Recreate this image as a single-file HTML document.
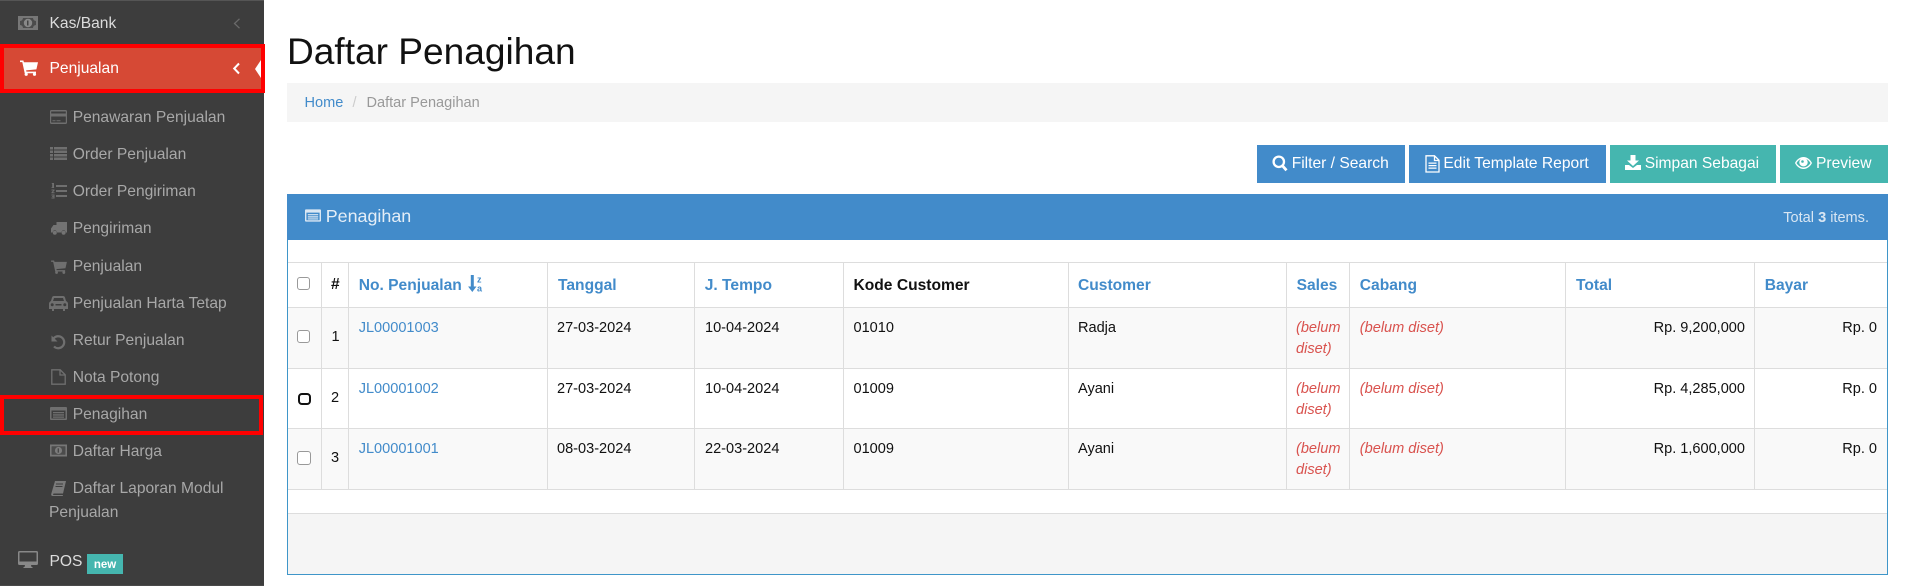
<!DOCTYPE html>
<html><head><meta charset="utf-8"><title>Daftar Penagihan</title>
<style>
html,body{margin:0;padding:0;background:#fff;width:1910px;height:586px;overflow:hidden}
body{position:relative;font-family:"Liberation Sans",Arial,sans-serif;font-size:14.56px;color:#111}
.a{position:absolute}
.t{position:absolute;white-space:nowrap;line-height:20px;height:20px}
.s{font-size:15.6px;color:#a8a8a8}
.m{font-size:15.6px;color:#dcdcdc}
.h{font-size:15.6px;font-weight:bold;color:#428bca;top:276px}
.l{color:#428bca}
.r{color:#d9534f;font-style:italic}
.b{position:absolute;top:145px;height:38px;background:#428bca}
.g{background:#45b6af}
.bt{font-size:15.6px;color:#fff;top:154px}
.hl{position:absolute;left:288px;width:1599px;height:1px;background:#ddd}
.vl{position:absolute;top:262px;width:1px;height:228px;background:#ddd}
.c{position:absolute;left:297px;width:11px;height:11px;border:1.5px solid #999;border-radius:3px;background:#fff}
svg{position:absolute;display:block}
</style></head><body>
<div class="a" style="left:0;top:0;width:264px;height:586px;background:#3d3d3d"></div>
<div class="a" style="left:0;top:0;width:264px;height:1px;background:#555"></div>
<div class="a" style="left:0;top:585px;width:264px;height:1px;background:#4a4a4a"></div>

<svg style="left:18px;top:16px" width="20" height="14" viewBox="0 0 20 14"><path fill="#777" fill-rule="evenodd" d="M0 0h20v14H0zM2 2.500v9h16v-9z"/><rect x="2" y="2" width="16" height="10" fill="#4c4c4c"/><path d="M2 2h3a3 3 0 0 1-3 3zM18 2h-3a3 3 0 0 0 3 3zM2 12h3a3 3 0 0 0-3-3zM18 12h-3a3 3 0 0 1 3-3z" fill="#777"/><circle cx="10" cy="7" r="4.200" fill="#888"/><path d="M9 4.500h1.500v5H9z" fill="#444"/></svg>
<div class="t m" style="left:49.500px;top:14px">Kas/Bank</div>
<svg style="left:233px;top:18px" width="8" height="11" viewBox="0 0 8 11"><path d="M6.500 .8 1.500 5.500l5 4.700" fill="none" stroke="#6a6a6a" stroke-width="1.300"/></svg>

<div class="a" style="left:0;top:44px;width:257px;height:41px;border:4px solid #f00;background:#d64935"></div>
<svg style="left:20px;top:60px" width="18" height="16" viewBox="0 0 18 16"><path fill="#fff" d="M0 .5h3.400l.5 1.700H18l-1.600 7.200-10.300 1 .3 1.200H16v1.600H4.700L2.300 2.100H0z"/><circle cx="6.200" cy="14.300" r="1.600" fill="#fff"/><circle cx="14.500" cy="14.300" r="1.600" fill="#fff"/></svg>
<div class="t" style="left:49.500px;top:58.500px;font-size:15.6px;color:#fff">Penjualan</div>
<svg style="left:232px;top:62px" width="9" height="13" viewBox="0 0 9 13"><path d="M7 1.500 2.200 6.500l4.800 5" fill="none" stroke="#fff" stroke-width="2"/></svg>
<svg style="left:255px;top:60px" width="6" height="18" viewBox="0 0 6 18"><path d="M6 0v18L0 9z" fill="#fff"/></svg>

<svg style="left:50px;top:110px" width="17" height="14" viewBox="0 0 17 14"><path fill="#6f6f6f" fill-rule="evenodd" d="M1.500 0h14A1.500 1.500 0 0 1 17 1.500v11a1.500 1.500 0 0 1-1.500 1.500h-14A1.500 1.500 0 0 1 0 12.500v-11A1.500 1.500 0 0 1 1.500 0zM1.200 6.500v6h14.600v-6zM1.200 1.500v2h14.600v-2z"/><path fill="#6f6f6f" d="M2.500 10.200h3v1h-3zM6.500 10.200h4v1h-4z"/></svg>
<div class="t s" style="left:72.700px;top:108px">Penawaran Penjualan</div>
<svg style="left:50px;top:147px" width="17" height="13" viewBox="0 0 17 13"><path fill="#6f6f6f" d="M0 0h3v2.500H0zM4 0h13v2.500H4zM0 3.500h3V6H0zM4 3.500h13V6H4zM0 7h3v2.500H0zM4 7h13v2.500H4zM0 10.500h3V13H0zM4 10.500h13V13H4z"/></svg>
<div class="t s" style="left:72.700px;top:145px">Order Penjualan</div>
<svg style="left:51px;top:183px" width="16" height="16" viewBox="0 0 16 16"><path fill="#6f6f6f" d="M5 2h11v2H5zM5 7h11v2H5zM5 12h11v2H5zM1 0h2v4.500H3.200v.5H.5v-.7H1.200V1H.6zM.5 6.500h3v1L1.800 9.200h1.700v1h-3v-.9l1.800-1.800H.5zM.5 11.500h3v4h-3v-1h2v-.5h-1.500v-.8h1.500v-.7h-2z"/></svg>
<div class="t s" style="left:72.700px;top:182px">Order Pengiriman</div>
<svg style="left:51px;top:222px" width="16" height="13" viewBox="0 0 16 13"><path fill="#737373" d="M5.500 0H16v10.500h-1.200a2.200 2.200 0 0 0-4.400 0H6a2.200 2.200 0 0 0-4.400 0H0V6.500L2.500 3h3z"/><circle cx="3.800" cy="10.800" r="2" fill="#737373"/><circle cx="12.600" cy="10.800" r="2" fill="#737373"/></svg>
<div class="t s" style="left:72.700px;top:219px">Pengiriman</div>
<svg style="left:51px;top:260px" width="16" height="14" viewBox="0 0 18 16"><path fill="#6f6f6f" d="M0 .5h3.400l.5 1.700H18l-1.600 7.200-10.300 1 .3 1.200H16v1.600H4.700L2.300 2.100H0z"/><circle cx="6.200" cy="14.300" r="1.600" fill="#6f6f6f"/><circle cx="14.500" cy="14.300" r="1.600" fill="#6f6f6f"/></svg>
<div class="t s" style="left:72.700px;top:257px">Penjualan</div>
<svg style="left:49px;top:296px" width="19" height="15" viewBox="0 0 19 15"><path fill="#6f6f6f" fill-rule="evenodd" d="M5 0h9c1 0 1.700.6 2 1.500L17 5c1.200.5 2 1.500 2 2.800V13h-3v2h-2v-2H5v2H3v-2H0V7.800C0 6.500.8 5.500 2 5l1-3.500C3.300.6 4 0 5 0zM5 2 4 5h11l-1-3zM3.200 7.200a1.500 1.500 0 1 0 0 3 1.500 1.500 0 0 0 0-3zM15.800 7.200a1.500 1.500 0 1 0 0 3 1.500 1.500 0 0 0 0-3zM6.500 8v1.500h6V8z"/></svg>
<div class="t s" style="left:72.700px;top:294px">Penjualan Harta Tetap</div>
<svg style="left:51px;top:335px" width="15" height="15" viewBox="0 0 15 15"><path d="M2.500 3.500A6 6 0 1 1 3 11.500" fill="none" stroke="#6f6f6f" stroke-width="2.200"/><path d="M.5.500v6h6z" fill="#6f6f6f"/></svg>
<div class="t s" style="left:72.700px;top:331px">Retur Penjualan</div>
<svg style="left:51px;top:369px" width="15" height="16" viewBox="0 0 15 16"><path d="M.8.800h8.400l5 5v9.400H.8zM9 1v5h5" fill="none" stroke="#6f6f6f" stroke-width="1.300"/></svg>
<div class="t s" style="left:72.700px;top:368px">Nota Potong</div>

<div class="a" style="left:0;top:395px;width:255px;height:32px;border:4px solid #f00"></div>
<svg style="left:50px;top:407px" width="17" height="13" viewBox="0 0 17 13"><path fill="#6f6f6f" fill-rule="evenodd" d="M1 0h15a1 1 0 0 1 1 1v11a1 1 0 0 1-1 1H1a1 1 0 0 1-1-1V1a1 1 0 0 1 1-1zM1.500 3.500v8h14v-8z"/><path fill="#6f6f6f" d="M3 5h11v1.300H3zM3 7.300h11v1.300H3zM3 9.500h11v1.200H3z"/></svg>
<div class="t s" style="left:72.700px;top:405px">Penagihan</div>
<svg style="left:50px;top:444px" width="17" height="13" viewBox="0 0 20 14"><path fill="#777" fill-rule="evenodd" d="M0 0h20v14H0zM2 2.500v9h16v-9z"/><rect x="2" y="2" width="16" height="10" fill="#4c4c4c"/><circle cx="10" cy="7" r="4.200" fill="#7c7c7c"/><path d="M9 4.500h1.500v5H9z" fill="#444"/></svg>
<div class="t s" style="left:72.700px;top:442px">Daftar Harga</div>
<svg style="left:51px;top:481px" width="15" height="15" viewBox="0 0 15 15"><path fill="#7a7a7a" d="M4 0h11l-3 12.500H2.500L2 14h10l-.3 1H1.500C.5 15 0 14 .2 13z"/><path d="M5 3h7M4.500 5.500h7" stroke="#3d3d3d" stroke-width="1"/></svg>
<div class="t s" style="left:72.700px;top:479px">Daftar Laporan Modul</div>
<div class="t s" style="left:49px;top:503px">Penjualan</div>

<svg style="left:18px;top:551px" width="20" height="18" viewBox="0 0 20 18"><path fill="#888" fill-rule="evenodd" d="M1.500 0h17A1.500 1.500 0 0 1 20 1.500v11a1.500 1.500 0 0 1-1.500 1.500H13l.5 2h1v1h-9v-1h1l.5-2H1.500A1.500 1.500 0 0 1 0 12.500v-11A1.500 1.500 0 0 1 1.500 0zM1.500 1.500v9h17v-9z"/></svg>
<div class="t m" style="left:49.500px;top:552px">POS</div>
<div class="a" style="left:87px;top:554px;width:36px;height:20px;background:#45b6af;color:#fff;font-weight:bold;font-size:11.500px;line-height:22px;text-align:center">new</div>

<div class="t" style="left:287px;top:29px;height:44px;line-height:44px;font-size:37.100px;color:#111">Daftar Penagihan</div>
<div class="a" style="left:287px;top:83px;width:1601px;height:39px;background:#f5f5f5"></div>
<div class="t l" style="left:304.500px;top:93px">Home</div>
<div class="t" style="left:352.500px;top:93px;color:#ccc">/</div>
<div class="t" style="left:366.500px;top:93px;color:#999">Daftar Penagihan</div>

<div class="b" style="left:1257px;width:148px"></div>
<svg style="left:1272px;top:155px" width="16" height="17" viewBox="0 0 16 17"><circle cx="6.800" cy="6.800" r="5.200" fill="none" stroke="#fff" stroke-width="2.300"/><path d="m10.500 10.800 4 4.500" stroke="#fff" stroke-width="2.800"/></svg>
<div class="t bt" style="left:1291.700px">Filter / Search</div>
<div class="b" style="left:1409px;width:197px"></div>
<svg style="left:1425px;top:155px" width="15" height="18" viewBox="0 0 15 18"><path d="M1 .8h8.500L14 5.300V17H1zM9.500 1v4.500H14" fill="none" stroke="#fff" stroke-width="1.300"/><path d="M3.500 7.500h8v1.300h-8zM3.500 10h8v1.300h-8zM3.500 12.500h8v1.300h-8z" fill="#fff"/></svg>
<div class="t bt" style="left:1443.400px">Edit Template Report</div>
<div class="b g" style="left:1610px;width:166px"></div>
<svg style="left:1625px;top:155px" width="16" height="15" viewBox="0 0 16 15"><path d="M5.500 0h5v5.500H14L8 11 2 5.500h3.500z" fill="#fff"/><path d="M0 10h4l4 3 4-3h4v5H0z" fill="#fff"/></svg>
<div class="t bt" style="left:1644.700px">Simpan Sebagai</div>
<div class="b g" style="left:1780px;width:108px"></div>
<svg style="left:1795px;top:157px" width="17" height="12" viewBox="0 0 17 12"><path fill="#fff" fill-rule="evenodd" d="M8.500 0C12.500 0 15.500 3 17 6c-1.500 3-4.500 6-8.500 6S1.500 9 0 6c1.500-3 4.500-6 8.500-6zM1.500 6c1.200 2.200 3.800 4.500 7 4.500s5.800-2.300 7-4.500c-1-1.800-2.500-3.200-4.200-3.900a4.200 4.200 0 1 1-5.600 0C4 2.800 2.500 4.200 1.500 6z"/><circle cx="7.500" cy="4.500" r="1.300" fill="#45b6af"/></svg>
<div class="t bt" style="left:1816px">Preview</div>

<div class="a" style="left:287px;top:194px;width:1599px;height:380px;border:1px solid #3f96c9;border-top:0"></div>
<div class="a" style="left:287px;top:194px;width:1601px;height:46px;background:#428bca"></div>
<svg style="left:305px;top:209px" width="16" height="13" viewBox="0 0 17 13"><path fill="#dbe8f4" fill-rule="evenodd" d="M1 0h15a1 1 0 0 1 1 1v11a1 1 0 0 1-1 1H1a1 1 0 0 1-1-1V1a1 1 0 0 1 1-1zM1.500 3.500v8h14v-8z"/><path fill="#dbe8f4" d="M3 5h11v1.300H3zM3 7.300h11v1.300H3zM3 9.500h11v1.200H3z"/></svg>
<div class="t" style="left:325.700px;top:206px;font-size:17.900px;color:#e4eef7">Penagihan</div>
<div class="t" style="right:41px;top:208px;color:#d8e6f3">Total <b>3</b> items.</div>

<div class="a" style="left:288px;top:308px;width:1599px;height:60px;background:#f9f9f9"></div>
<div class="a" style="left:288px;top:429px;width:1599px;height:60px;background:#f9f9f9"></div>
<div class="a" style="left:288px;top:514px;width:1599px;height:60px;background:#f5f5f5"></div>
<div class="hl" style="top:262px"></div><div class="hl" style="top:307px"></div><div class="hl" style="top:368px"></div><div class="hl" style="top:428px"></div><div class="hl" style="top:489px"></div><div class="hl" style="top:513px"></div>
<div class="vl" style="left:321px"></div><div class="vl" style="left:348px"></div><div class="vl" style="left:547px"></div><div class="vl" style="left:694px"></div><div class="vl" style="left:843px"></div><div class="vl" style="left:1068px"></div><div class="vl" style="left:1286px"></div><div class="vl" style="left:1349px"></div><div class="vl" style="left:1565px"></div><div class="vl" style="left:1754px"></div>

<div class="c" style="top:277px"></div>
<div class="t" style="left:331px;top:275px;font-size:15.6px;font-weight:bold;color:#111">#</div>
<div class="t h" style="left:358.700px">No. Penjualan</div>
<svg style="left:468px;top:275px" width="15" height="18" viewBox="0 0 15 18"><path d="M2.800 0h3v11.500h2.700L4.300 17 .1 11.500h2.700z" fill="#428bca"/><text x="9" y="7.500" font-size="9" font-weight="bold" fill="#428bca" font-family="Liberation Sans">z</text><text x="9" y="16.500" font-size="9" font-weight="bold" fill="#428bca" font-family="Liberation Sans">a</text></svg>
<div class="t h" style="left:558px">Tanggal</div>
<div class="t h" style="left:704.700px">J. Tempo</div>
<div class="t h" style="left:853.500px;color:#111">Kode Customer</div>
<div class="t h" style="left:1078px">Customer</div>
<div class="t h" style="left:1296.600px">Sales</div>
<div class="t h" style="left:1359.800px">Cabang</div>
<div class="t h" style="left:1576px">Total</div>
<div class="t h" style="left:1764.700px">Bayar</div>

<div class="c" style="top:330px"></div>
<div class="t" style="left:331.500px;top:327px">1</div>
<div class="t l" style="left:358.700px;top:318px">JL00001003</div>
<div class="t" style="left:557px;top:318px">27-03-2024</div>
<div class="t" style="left:705px;top:318px">10-04-2024</div>
<div class="t" style="left:853.500px;top:318px">01010</div>
<div class="t" style="left:1078px;top:318px">Radja</div>
<div class="t r" style="left:1296px;top:318px">(belum</div>
<div class="t r" style="left:1296px;top:339px">diset)</div>
<div class="t r" style="left:1359.800px;top:318px">(belum diset)</div>
<div class="t" style="right:165px;top:318px">Rp. 9,200,000</div>
<div class="t" style="right:33px;top:318px">Rp. 0</div>

<div class="a" style="left:298px;top:393px;width:9px;height:8px;border:2.500px solid #111;border-radius:4px;background:#fff"></div>
<div class="t" style="left:331px;top:388px">2</div>
<div class="t l" style="left:358.700px;top:379px">JL00001002</div>
<div class="t" style="left:557px;top:379px">27-03-2024</div>
<div class="t" style="left:705px;top:379px">10-04-2024</div>
<div class="t" style="left:853.500px;top:379px">01009</div>
<div class="t" style="left:1078px;top:379px">Ayani</div>
<div class="t r" style="left:1296px;top:379px">(belum</div>
<div class="t r" style="left:1296px;top:400px">diset)</div>
<div class="t r" style="left:1359.800px;top:379px">(belum diset)</div>
<div class="t" style="right:165px;top:379px">Rp. 4,285,000</div>
<div class="t" style="right:33px;top:379px">Rp. 0</div>

<div class="c" style="top:451px;width:12px;height:12px"></div>
<div class="t" style="left:331px;top:448px">3</div>
<div class="t l" style="left:358.700px;top:439px">JL00001001</div>
<div class="t" style="left:557px;top:439px">08-03-2024</div>
<div class="t" style="left:705px;top:439px">22-03-2024</div>
<div class="t" style="left:853.500px;top:439px">01009</div>
<div class="t" style="left:1078px;top:439px">Ayani</div>
<div class="t r" style="left:1296px;top:439px">(belum</div>
<div class="t r" style="left:1296px;top:460px">diset)</div>
<div class="t r" style="left:1359.800px;top:439px">(belum diset)</div>
<div class="t" style="right:165px;top:439px">Rp. 1,600,000</div>
<div class="t" style="right:33px;top:439px">Rp. 0</div>
</body></html>
